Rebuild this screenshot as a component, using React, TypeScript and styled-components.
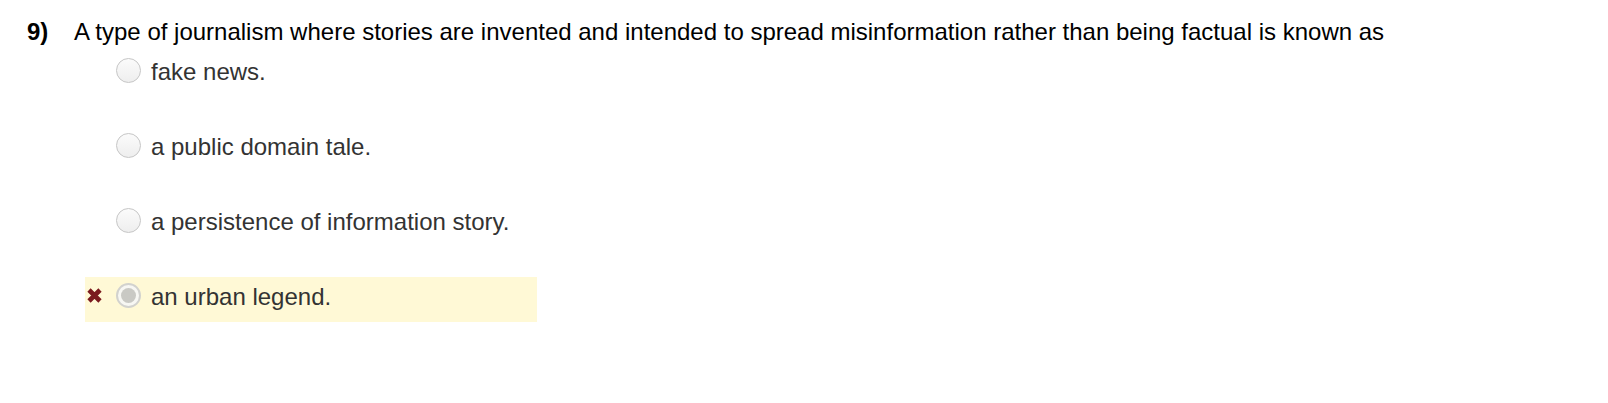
import React from "react";
import styled, { createGlobalStyle } from "styled-components";

const GlobalStyle = createGlobalStyle`
  html, body {
    margin: 0;
    padding: 0;
    background: #fff;
  }
  body {
    font-family: "Liberation Sans", Arial, Helvetica, sans-serif;
  }
`;

interface Choice {
  label: string;
  selected?: boolean;
  wrong?: boolean;
}

const CHOICES: Choice[] = [
  { label: "fake news." },
  { label: "a public domain tale." },
  { label: "a persistence of information story." },
  { label: "an urban legend.", selected: true, wrong: true },
];

export default function App() {
  return (
    <>
      <GlobalStyle />
      <Question>
        <Stem>
          <Number>9)</Number>
          <StemText>
            A type of journalism where stories are invented and intended to
            spread misinformation rather than being factual is known as
          </StemText>
        </Stem>
        <Choices>
          {CHOICES.map((choice) => (
            <Option key={choice.label} $highlight={choice.wrong}>
              <Marker>{choice.wrong && <WrongMark />}</Marker>
              <Radio
                type="radio"
                name="q9"
                checked={!!choice.selected}
                disabled
                readOnly
              />
              <Label>{choice.label}</Label>
            </Option>
          ))}
        </Choices>
      </Question>
    </>
  );
}

// heavy "x" shown next to a wrong answer
const WrongMark = () => (
  <XIcon width="17" height="17" viewBox="0 0 17 17" aria-label="incorrect">
    <path
      d="M3 3 L14 14 M14 3 L3 14"
      stroke="currentColor"
      strokeWidth="4.6"
      strokeLinecap="butt"
    />
  </XIcon>
);

const Question = styled.div`
  padding: 20px 0 0 27px;
`;

const Stem = styled.div`
  display: flex;
  font-size: 24px;
  line-height: 24px;
  color: #000;
`;

const Number = styled.span`
  width: 47px;
  flex: none;
  font-weight: bold;
`;

const StemText = styled.span`
  white-space: nowrap;
`;

const Choices = styled.div`
  display: flex;
  flex-direction: column;
  gap: 30px;
  margin-top: 8px;
  padding-left: 58px;
`;

const Option = styled.div<{ $highlight?: boolean }>`
  display: flex;
  align-items: flex-start;
  box-sizing: border-box;
  width: 452px;
  height: 45px;
  padding-top: 6px;
  background: ${(p) => (p.$highlight ? "#fff9d6" : "transparent")};
`;

const Marker = styled.div`
  width: 31px;
  flex: none;
  padding-left: 1px;
  padding-top: 4px;
  box-sizing: border-box;
  color: #7a1a1e;
`;

const XIcon = styled.svg`
  display: block;
`;

const Radio = styled.input`
  appearance: none;
  -webkit-appearance: none;
  flex: none;
  position: relative;
  box-sizing: border-box;
  width: 25px;
  height: 25px;
  margin: 0 10px 0 0;
  border-radius: 50%;
  border: 1.5px solid #c6c6c6;
  background: linear-gradient(#fbfbfb, #eeeeee);

  &:checked {
    border: 2px solid #d2d2ce;
    background: #f7f7f3;
  }

  &:checked::before {
    content: "";
    position: absolute;
    top: 50%;
    left: 50%;
    width: 15px;
    height: 15px;
    margin: -7.5px 0 0 -7.5px;
    border-radius: 50%;
    background: #c9c9c4;
  }
`;

const Label = styled.span`
  padding-top: 2px;
  font-size: 24px;
  line-height: 23px;
  color: #333;
  white-space: nowrap;
`;
